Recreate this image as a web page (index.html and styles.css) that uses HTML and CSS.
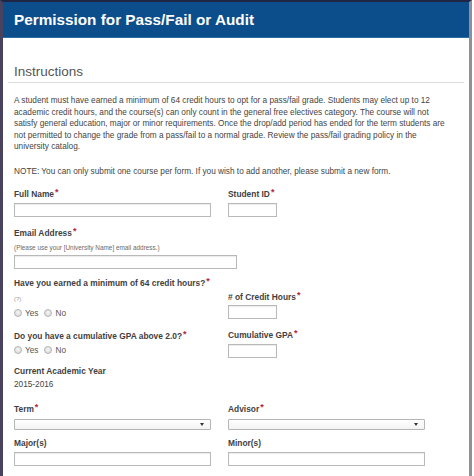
FILE: index.html
```html
<!DOCTYPE html>
<html lang="en">
<head>
  <meta charset="UTF-8">
  <title>Permission for Pass/Fail or Audit</title>
  <meta name="viewport" content="width=device-width, initial-scale=1.0">
  <link rel="stylesheet" href="styles.css">
</head>
<body>
  <div class="window">
    <header class="banner">
      <h1>Permission for Pass/Fail or Audit</h1>
    </header>

    <main class="content">
      <section class="instructions">
        <h2>Instructions</h2>
        <p>A student must have earned a minimum of 64 credit hours to opt for a pass/fail grade. Students may elect up to 12 academic credit hours, and the course(s) can only count in the general free electives category. The course will not satisfy general education, major or minor requirements. Once the drop/add period has ended for the term students are not permitted to change the grade from a pass/fail to a normal grade. Review the pass/fail grading policy in the university catalog.</p>
        <p class="note">NOTE: You can only submit one course per form. If you wish to add another, please submit a new form.</p>
      </section>

      <form class="form">
        <div class="row row-name">
          <div class="col">
            <label>Full Name<span class="req">*</span></label>
            <input type="text" class="input input-wide">
          </div>
          <div class="col">
            <label>Student ID<span class="req">*</span></label>
            <input type="text" class="input input-short">
          </div>
        </div>

        <div class="row row-email">
          <div class="col col-full">
            <label>Email Address<span class="req">*</span></label>
            <div class="help">(Please use your [University Name] email address.)</div>
            <input type="text" class="input input-email">
          </div>
        </div>

        <div class="row row-hours">
          <div class="col">
            <label>Have you earned a minimum of 64 credit hours?<span class="req">*</span></label>
            <div class="hint">(?)</div>
            <div class="choices">
              <span class="radio"></span><span class="choice">Yes</span>
              <span class="radio"></span><span class="choice">No</span>
            </div>
          </div>
          <div class="col col-low">
            <label># of Credit Hours<span class="req">*</span></label>
            <input type="text" class="input input-short">
          </div>
        </div>

        <div class="row row-gpa">
          <div class="col">
            <label class="nudge">Do you have a cumulative GPA above 2.0?<span class="req">*</span></label>
            <div class="choices">
              <span class="radio"></span><span class="choice">Yes</span>
              <span class="radio"></span><span class="choice">No</span>
            </div>
          </div>
          <div class="col">
            <label>Cumulative GPA<span class="req">*</span></label>
            <input type="text" class="input input-short">
          </div>
        </div>

        <div class="row row-year">
          <div class="col">
            <label>Current Academic Year</label>
            <div class="value">2015-2016</div>
          </div>
        </div>

        <div class="row row-term">
          <div class="col">
            <label>Term<span class="req">*</span></label>
            <div class="select"></div>
          </div>
          <div class="col">
            <label>Advisor<span class="req">*</span></label>
            <div class="select"></div>
          </div>
        </div>

        <div class="row row-major">
          <div class="col">
            <label>Major(s)</label>
            <input type="text" class="input input-wide">
          </div>
          <div class="col">
            <label>Minor(s)</label>
            <input type="text" class="input input-wide">
          </div>
        </div>

        <div class="row row-type">
          <div class="col col-full">
            <label>Are you requesting Pass/Fail or Audit?</label>
          </div>
        </div>
      </form>
    </main>
  </div>
</body>
</html>
```

FILE: styles.css
```css
:root {
  --blue: #0c4e8b;
  --label: #3f3f3f;
  --text: #444444;
  --req: #b8233a;
  --field-border: #b9b9b9;
}

body {
  margin: 0;
  background: #ffffff;
  font-family: 'Liberation Sans', Arial, sans-serif;
  color: var(--text);
  overflow: hidden;
}

.window {
  width: 466px;
  min-height: 474px;
  border-left: 3px solid #48425f;
  border-top: 2px solid #1e2545;
  border-right: 3px solid #8f8f9b;
  background: #ffffff;
}

.banner {
  height: 36px;
  background: var(--blue);
  display: flex;
  align-items: center;
  padding-left: 11px;
  border-bottom: 1px solid #2f6aa1;
  box-sizing: border-box;
}

.banner h1 {
  margin: 0;
  color: #ffffff;
  font-size: 15.3px;
  font-weight: bold;
}

.content {
  padding: 0 5px;
}

.instructions h2 {
  margin: 26px 0 0;
  padding: 0 6px 2px;
  font-size: 13.5px;
  font-weight: normal;
  line-height: 16px;
  color: #555555;
  border-bottom: 1px solid #dddddd;
}

.instructions p {
  margin: 12px 11px 0 6px;
  font-size: 8.25px;
  line-height: 11.5px;
  color: var(--text);
}

.instructions .note {
  margin-top: 13px;
}

.form {
  padding: 0 6px;
  margin-top: 9px;
}

.row {
  display: flex;
}

.col {
  width: 214px;
  display: flex;
  flex-direction: column;
  align-items: flex-start;
}

.col-full {
  width: auto;
}

label {
  font-size: 8.4px;
  font-weight: bold;
  line-height: 12px;
  color: var(--label);
}

.req {
  color: var(--req);
  font-size: 9px;
  vertical-align: 2px;
  margin-left: 1px;
}

.input {
  display: block;
  box-sizing: border-box;
  height: 14px;
  margin: 3px 0 0;
  padding: 0;
  border: 1px solid var(--field-border);
  box-shadow: inset 0 1px 1px #ececec;
  background: #ffffff;
}

.input-wide { width: 197px; }
.input-short { width: 49px; }
.input-email { width: 223px; margin-top: 1px; }

.help {
  margin-top: 3px;
  font-size: 6.4px;
  line-height: 12px;
  color: #6a6a6a;
}

.hint {
  margin-top: 4px;
  font-size: 6px;
  line-height: 12px;
  color: #9a9a9a;
}

.choices {
  display: flex;
  align-items: center;
  height: 12px;
  margin-top: 2px;
}

.radio {
  width: 6px;
  height: 6px;
  border: 1px solid #b3b3b3;
  border-radius: 50%;
  background: radial-gradient(circle at 50% 40%, #f4f4f4, #d6d6d6);
  margin-right: 3px;
}

.choice {
  font-size: 8.25px;
  color: #555555;
  margin-right: 6px;
}

.value {
  margin-top: 2px;
  font-size: 8.25px;
  line-height: 12px;
  color: var(--text);
}

.select {
  position: relative;
  box-sizing: border-box;
  width: 197px;
  height: 11px;
  margin-top: 4px;
  border: 1px solid #b5b5b5;
  border-radius: 1px;
  background: linear-gradient(#ffffff, #f3f3f3);
}

.select::after {
  content: "";
  position: absolute;
  right: 6px;
  top: 3px;
  border-left: 2px solid transparent;
  border-right: 2px solid transparent;
  border-top: 3px solid #333333;
}

.row-email { margin-top: 8px; }
.row-hours { margin-top: 6px; }
.row-gpa { margin-top: 8px; }
.row-year { margin-top: 7px; }
.row-term { margin-top: 10px; }
.row-major { margin-top: 7px; }
.row-type { margin-top: 10px; }

.col-low {
  padding-top: 14px;
}

.col-low .input {
  margin-top: 2px;
}

.nudge {
  margin-top: 1px;
}
```
